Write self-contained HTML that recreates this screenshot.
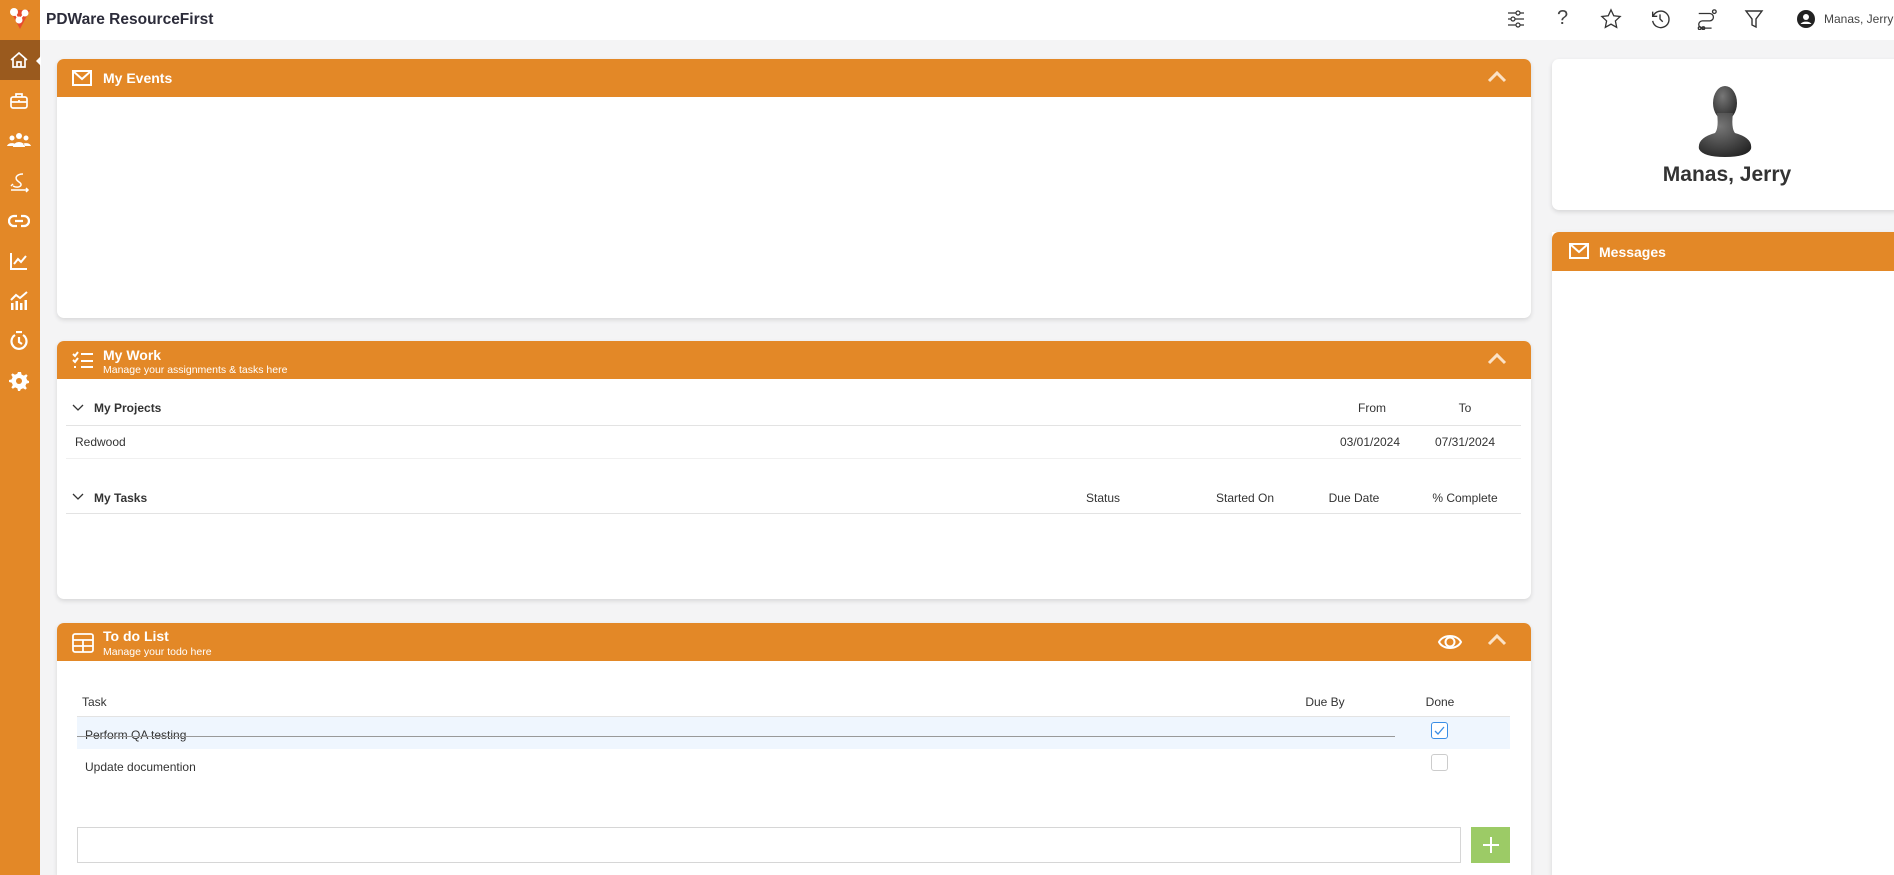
<!DOCTYPE html>
<html style="overflow:hidden;height:875px"><head><meta charset="utf-8"><style>
*{box-sizing:border-box;margin:0;padding:0}
body{width:1894px;height:875px;overflow:hidden;background:#f4f4f5;font-family:"Liberation Sans",sans-serif;color:#222;position:relative}
.abs{position:absolute}
.side{left:0;top:0;width:40px;height:875px;background:#e38827}
.top{left:40px;top:0;width:1854px;height:40px;background:#fff}
.card{background:#fff;border-radius:7px;box-shadow:0 2px 5px rgba(0,0,0,.12);overflow:hidden}
.hd{background:#e38827;color:#fff;position:absolute;left:0;right:0;top:0}
.t{font-weight:bold;font-size:14px}
.s{font-size:10.5px}
.th{font-size:12px;font-weight:bold;color:#333}
.td{font-size:12px;color:#333}
.line{height:1px;background:#e3e3e3}
</style></head><body>
<div class="abs side">
<svg class="abs" style="left:7px;top:5px" width="26" height="26" viewBox="0 0 26 26"><path d="M3 5 L13 24 L23 5 Z" fill="#e8452f" opacity=".9"/><circle cx="7" cy="7" r="4" fill="#fff"/><circle cx="18" cy="8" r="3.5" fill="#fff"/><circle cx="12" cy="15" r="3.5" fill="#fff"/><path d="M7 7L12 15L18 8" stroke="#fff" stroke-width="1.5" fill="none"/></svg>
<div class="abs" style="left:0;top:40px;width:40px;height:40px;background:#9a5a1e"></div>
<div class="abs" style="left:36px;top:56px;width:0;height:0;border-top:5px solid transparent;border-bottom:5px solid transparent;border-right:5px solid #fff"></div>
<svg class="abs" style="left:9px;top:50px" width="20" height="20" viewBox="0 0 20 20" fill="none" stroke="#fff" stroke-width="1.7"><path d="M2 10L10 3L18 10M4 8.5V17H16V8.5M8 17V12H12V17"/></svg>
<svg class="abs" style="left:9px;top:91px" width="20" height="20" viewBox="0 0 20 20" fill="none" stroke="#fff" stroke-width="1.7"><rect x="2" y="6" width="16" height="11" rx="2"/><path d="M7 6V3H13V6M2 11H18M9 10H11"/></svg>
<svg class="abs" style="left:7px;top:131px" width="24" height="20" viewBox="0 0 24 20" fill="#fff"><circle cx="12" cy="5" r="3"/><circle cx="5" cy="7" r="2.5"/><circle cx="19" cy="7" r="2.5"/><path d="M6 16a6 5 0 0 1 12 0Z M0 15a5 4 0 0 1 8-2L6 15Z M24 15a5 4 0 0 0-8-2L18 15Z"/></svg>
<svg class="abs" style="left:9px;top:171px" width="22" height="22" viewBox="0 0 22 22" fill="none" stroke="#fff" stroke-width="1.5"><path d="M14 3C8 3 4 7 10 11C15 14 10 18 4 15M2 19H19M17 17L19 19L17 21M4 13L2 15"/></svg>
<svg class="abs" style="left:8px;top:212px" width="22" height="18" viewBox="0 0 22 18" fill="none" stroke="#fff" stroke-width="2.3"><path d="M9 4H6a5 5 0 0 0 0 10H9M13 4H16a5 5 0 0 1 0 10H13M7 9H15"/></svg>
<svg class="abs" style="left:9px;top:251px" width="20" height="20" viewBox="0 0 20 20" fill="none" stroke="#fff" stroke-width="2"><path d="M2 2V18H18M5 13L9 8L12 11L17 5"/></svg>
<svg class="abs" style="left:9px;top:291px" width="20" height="20" viewBox="0 0 20 20" fill="#fff"><rect x="2" y="12" width="2.5" height="7"/><rect x="6.5" y="10" width="2.5" height="9"/><rect x="11" y="12" width="2.5" height="7"/><rect x="15.5" y="9" width="2.5" height="10"/><path d="M2 9L7 4L11 7L18 1" stroke="#fff" stroke-width="2" fill="none"/></svg>
<svg class="abs" style="left:9px;top:331px" width="20" height="20" viewBox="0 0 20 20" fill="none" stroke="#fff" stroke-width="2.2"><path d="M6 4A7.5 7.5 0 1 0 14 4M10 6V11L13 13M7 1H13"/></svg>
<svg class="abs" style="left:9px;top:371px" width="20" height="20" viewBox="0 0 20 20"><path fill="#fff" d="M10 1l2 0 .6 2.6 2.3 1 2.3-1.4 1.4 1.4-1.4 2.3 1 2.3L20 10v2l-2.6.6-1 2.3 1.4 2.3-1.4 1.4-2.3-1.4-2.3 1L11 20H9l-.6-2.6-2.3-1-2.3 1.4-1.4-1.4 1.4-2.3-1-2.3L0 11V9l2.6-.6 1-2.3L2.2 3.8l1.4-1.4 2.3 1.4 2.3-1L9 1z"/><circle cx="10" cy="10" r="3" fill="#e38827"/></svg>
</div>
<div class="abs top">
<div class="abs" style="left:6px;top:11px;font-weight:bold;font-size:15.5px;color:#2c2c3a">PDWare ResourceFirst</div>
<svg class="abs" style="left:1466px;top:9px" width="20" height="20" viewBox="0 0 20 20" fill="none" stroke="#333" stroke-width="1.2"><path d="M2 4H18M2 10H18M2 16H18"/><circle cx="12" cy="4" r="2" fill="#fff"/><circle cx="7" cy="10" r="2" fill="#fff"/><circle cx="12" cy="16" r="2" fill="#fff"/></svg>
<div class="abs" style="left:1517px;top:7px;font-size:20px;color:#444">?</div>
<svg class="abs" style="left:1560px;top:8px" width="22" height="22" viewBox="0 0 24 24" fill="none" stroke="#333" stroke-width="1.4"><path d="M12 2l3 6.5 7 .8-5.2 4.8 1.4 7L12 17.6 5.8 21.1l1.4-7L2 9.3l7-.8z"/></svg>
<svg class="abs" style="left:1609px;top:8px" width="22" height="22" viewBox="0 0 24 24" fill="none" stroke="#333" stroke-width="1.5"><path d="M4 4V9H9M4.5 9A9 9 0 1 1 4 14"/><path d="M12 7V12L15 15"/></svg>
<svg class="abs" style="left:1656px;top:8px" width="22" height="22" viewBox="0 0 24 24" fill="none" stroke="#333" stroke-width="1.4"><path d="M3 6H15A4 4 0 0 1 15 14H7A4 4 0 0 0 7 22H17"/><circle cx="20" cy="4" r="2"/><circle cx="4" cy="22" r="1.5"/><circle cx="8" cy="22" r="1.5"/></svg>
<svg class="abs" style="left:1704px;top:9px" width="20" height="20" viewBox="0 0 20 20" fill="none" stroke="#333" stroke-width="1.4"><path d="M2 2H18L12 10V18L8 16V10Z"/></svg>
<svg class="abs" style="left:1757px;top:10px" width="18" height="18" viewBox="0 0 18 18"><circle cx="9" cy="9" r="9" fill="#222"/><circle cx="9" cy="7" r="3" fill="#fff"/><path d="M3.5 14a6 4 0 0 1 11 0" fill="#fff"/></svg>
<div class="abs" style="left:1784px;top:12px;font-size:12px;color:#444">Manas, Jerry</div>
</div>

<div class="abs card" style="left:57px;top:59px;width:1474px;height:259px">
<div class="hd" style="height:38px">
<svg class="abs" style="left:15px;top:11px" width="20" height="16" viewBox="0 0 20 16" fill="none" stroke="#fff" stroke-width="2"><rect x="1" y="1" width="18" height="14"/><path d="M1 1L10 9L19 1"/></svg>
<div class="abs t" style="left:46px;top:11px">My Events</div>
<svg class="abs" style="left:1430px;top:11px" width="20" height="14" viewBox="0 0 20 14" fill="none" stroke="#fbe2c6" stroke-width="3"><path d="M2 11L10 3L18 11"/></svg>
</div></div>

<div class="abs card" style="left:57px;top:341px;width:1474px;height:258px">
<div class="hd" style="height:38px">
<svg class="abs" style="left:15px;top:10px" width="22" height="18" viewBox="0 0 22 18" fill="none" stroke="#fff" stroke-width="2"><path d="M1 3L3 5L6 1M9 3H21M1 9L3 11L6 7M9 10H21M2 16H4M9 16H21"/></svg>
<div class="abs t" style="left:46px;top:6px">My Work</div>
<div class="abs s" style="left:46px;top:23px">Manage your assignments &amp; tasks here</div>
<svg class="abs" style="left:1430px;top:11px" width="20" height="14" viewBox="0 0 20 14" fill="none" stroke="#fbe2c6" stroke-width="3"><path d="M2 11L10 3L18 11"/></svg>
</div>
<svg class="abs" style="left:15px;top:63px" width="12" height="8" viewBox="0 0 12 8" fill="none" stroke="#333" stroke-width="1.3"><path d="M1 1L6 6L11 1"/></svg>
<div class="abs th" style="left:37px;top:60px">My Projects</div>
<div class="abs td" style="left:1285px;top:60px;width:60px;text-align:center">From</div>
<div class="abs td" style="left:1378px;top:60px;width:60px;text-align:center">To</div>
<div class="abs line" style="left:9px;top:84px;width:1455px"></div>
<div class="abs td" style="left:18px;top:94px">Redwood</div>
<div class="abs td" style="left:1268px;top:94px;width:90px;text-align:center">03/01/2024</div>
<div class="abs td" style="left:1363px;top:94px;width:90px;text-align:center">07/31/2024</div>
<div class="abs line" style="left:9px;top:117px;width:1455px;background:#f0f0f0"></div>
<svg class="abs" style="left:15px;top:152px" width="12" height="8" viewBox="0 0 12 8" fill="none" stroke="#333" stroke-width="1.3"><path d="M1 1L6 6L11 1"/></svg>
<div class="abs th" style="left:37px;top:150px">My Tasks</div>
<div class="abs td" style="left:1006px;top:150px;width:80px;text-align:center">Status</div>
<div class="abs td" style="left:1143px;top:150px;width:90px;text-align:center">Started On</div>
<div class="abs td" style="left:1252px;top:150px;width:90px;text-align:center">Due Date</div>
<div class="abs td" style="left:1358px;top:150px;width:100px;text-align:center">% Complete</div>
<div class="abs line" style="left:9px;top:172px;width:1455px"></div>
</div>

<div class="abs card" style="left:57px;top:623px;width:1474px;height:252px;border-radius:7px 7px 0 0">
<div class="hd" style="height:38px">
<svg class="abs" style="left:15px;top:10px" width="22" height="20" viewBox="0 0 22 20" fill="none" stroke="#fff" stroke-width="1.8"><rect x="1" y="1" width="20" height="18" rx="2"/><path d="M1 7H21M1 13H21M11 7V19"/></svg>
<div class="abs t" style="left:46px;top:5px">To do List</div>
<div class="abs s" style="left:46px;top:23px">Manage your todo here</div>
<svg class="abs" style="left:1380px;top:8px" width="26" height="22" viewBox="0 0 26 22" fill="none" stroke="#fff" stroke-width="2"><path d="M2 11C6 3 20 3 24 11C20 19 6 19 2 11Z"/><circle cx="13" cy="11" r="4.5"/></svg>
<svg class="abs" style="left:1430px;top:10px" width="20" height="14" viewBox="0 0 20 14" fill="none" stroke="#fbe2c6" stroke-width="3"><path d="M2 11L10 3L18 11"/></svg>
</div>
<div class="abs td" style="left:25px;top:72px">Task</div>
<div class="abs td" style="left:1245px;top:72px;width:46px;text-align:center">Due By</div>
<div class="abs td" style="left:1363px;top:72px;width:40px;text-align:center">Done</div>
<div class="abs line" style="left:20px;top:93px;width:1433px"></div>
<div class="abs" style="left:20px;top:94px;width:1433px;height:32px;background:#eff6fe"></div>
<div class="abs td" style="left:28px;top:105px">Perform QA testing</div>
<div class="abs" style="left:20px;top:113px;width:1318px;height:1px;background:#999"></div>
<div class="abs" style="left:1374px;top:99px;width:17px;height:17px;border:1.5px solid #3a8ee6;border-radius:3px;background:#fff"></div>
<svg class="abs" style="left:1377px;top:103px" width="11" height="9" viewBox="0 0 11 9" fill="none" stroke="#3a8ee6" stroke-width="1.3"><path d="M1 5L4 8L10 1"/></svg>
<div class="abs td" style="left:28px;top:137px">Update documention</div>
<div class="abs" style="left:1374px;top:131px;width:17px;height:17px;border:1px solid #ccc;border-radius:3px;background:#fff"></div>
<div class="abs" style="left:20px;top:204px;width:1384px;height:36px;border:1px solid #d6d6d6;background:#fff"></div>
<div class="abs" style="left:1414px;top:204px;width:39px;height:36px;background:#9ccb66"></div>
<svg class="abs" style="left:1424px;top:212px" width="20" height="20" viewBox="0 0 20 20" stroke="#fff" stroke-width="2"><path d="M10 2V18M2 10H18"/></svg>
</div>

<div class="abs card" style="left:1552px;top:59px;width:350px;height:151px;border-radius:7px">
<svg class="abs" style="left:143px;top:24px" width="60" height="76" viewBox="0 0 60 76"><defs><radialGradient id="g" cx=".4" cy=".3" r=".8"><stop offset="0" stop-color="#777"/><stop offset="1" stop-color="#222"/></radialGradient></defs><ellipse cx="30" cy="20" rx="12" ry="17" fill="url(#g)"/><path d="M22 30Q24 45 20 50Q2 55 4 66Q8 74 30 74Q52 74 56 66Q58 55 40 50Q36 45 38 30Z" fill="url(#g)"/></svg>
<div class="abs" style="left:0;width:350px;top:104px;text-align:center;font-size:21px;font-weight:bold;color:#333">Manas, Jerry</div>
</div>
<div class="abs" style="left:1552px;top:232px;width:342px;height:643px;background:#fff;box-shadow:0 2px 5px rgba(0,0,0,.12)">
<div class="hd" style="height:39px;border-radius:7px 0 0 0">
<svg class="abs" style="left:17px;top:11px" width="20" height="16" viewBox="0 0 20 16" fill="none" stroke="#fff" stroke-width="2"><rect x="1" y="1" width="18" height="14"/><path d="M1 1L10 9L19 1"/></svg>
<div class="abs t" style="left:47px;top:12px">Messages</div>
</div></div>
</body></html>
